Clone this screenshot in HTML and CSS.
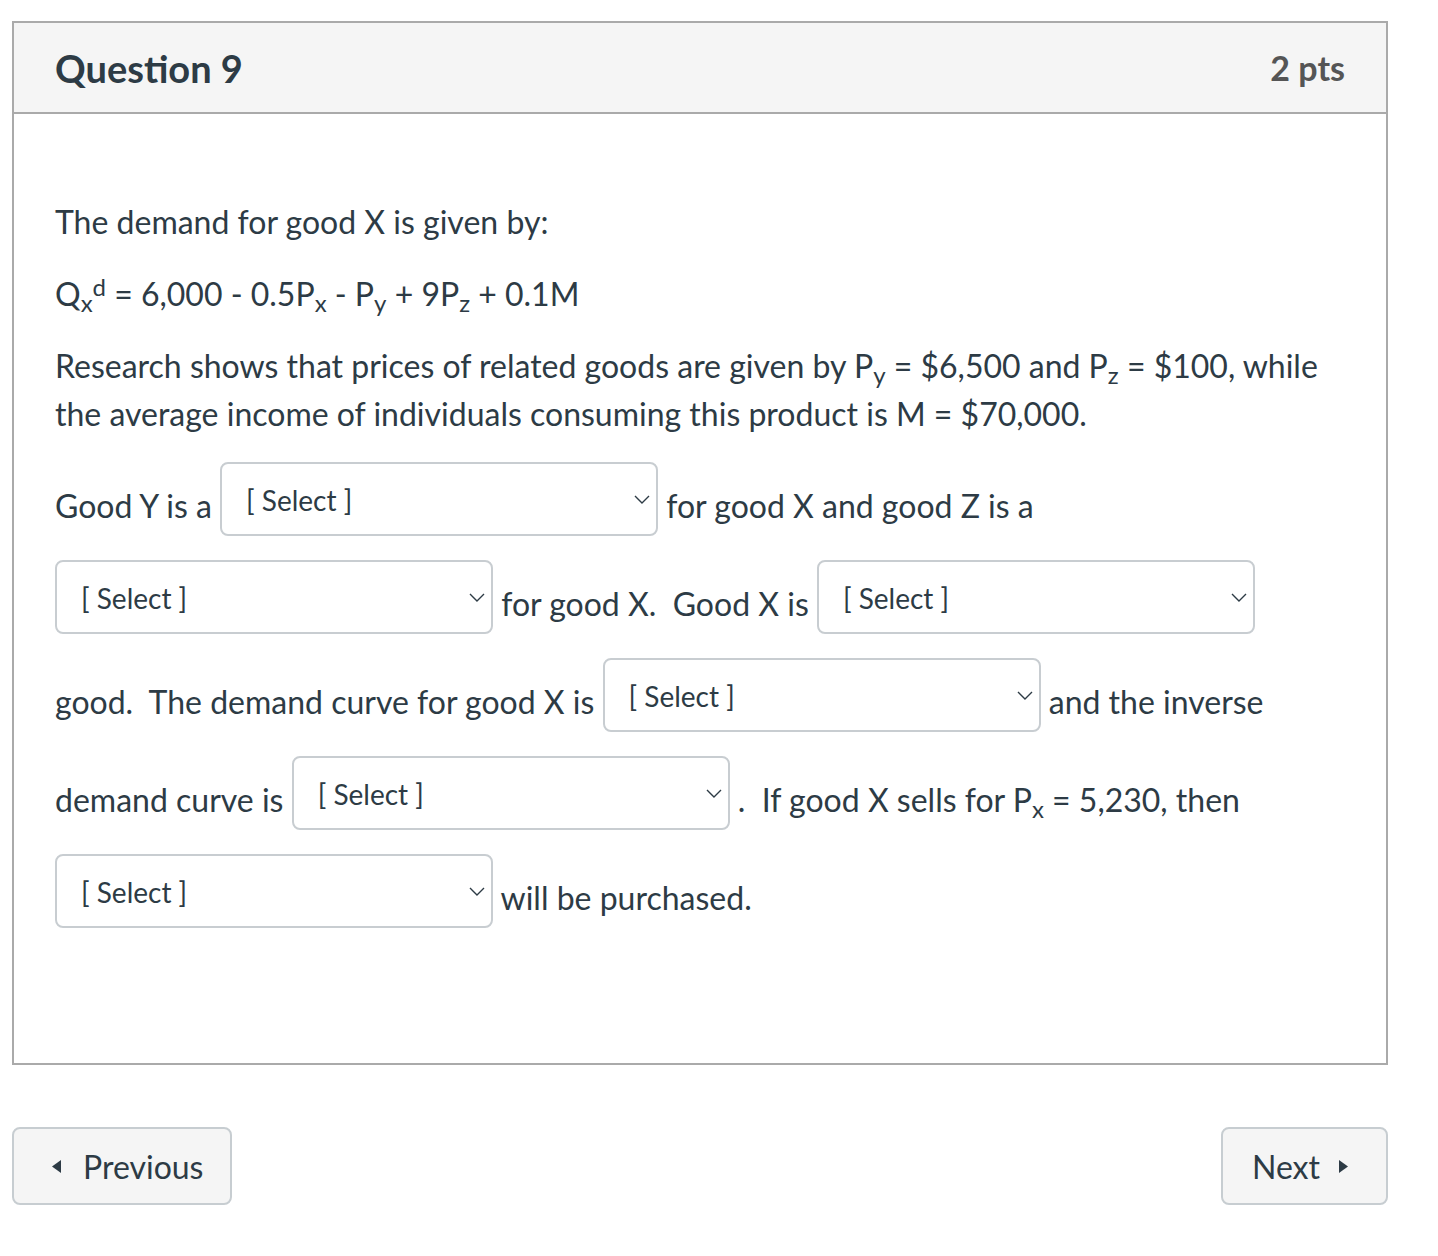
FILE: index.html
```html
<!DOCTYPE html>
<html lang="en">
<head>
<meta charset="utf-8">
<title>Question 9</title>
<link rel="stylesheet" href="styles.css">
</head>
<body>
<div class="page">
  <div class="question">
    <div class="header">
      <h2 class="title">Question 9</h2>
      <span class="points">2 pts</span>
    </div>
    <div class="text">
      <p>The demand for good X is given by:</p>
      <p>Q<sub>x</sub><sup>d</sup> = 6,000 - 0.5P<sub>x</sub> - P<sub>y</sub> + 9P<sub>z</sub> + 0.1M</p>
      <p>Research shows that prices of related goods are given by P<sub>y</sub> = $6,500 and P<sub>z</sub> = $100, while the average income of individuals consuming this product is M = $70,000.</p>
      <p class="blanks">Good Y is a <span class="select"><span class="select-label">[ Select ]</span><svg class="chev" width="16" height="9" viewBox="0 0 16 9"><polyline points="1,1 8,8 15,1" fill="none" stroke="#2d3b45" stroke-width="1.4"/></svg></span> for good X and good Z is a <span class="select"><span class="select-label">[ Select ]</span><svg class="chev" width="16" height="9" viewBox="0 0 16 9"><polyline points="1,1 8,8 15,1" fill="none" stroke="#2d3b45" stroke-width="1.4"/></svg></span> for good X.&nbsp; Good X is <span class="select"><span class="select-label">[ Select ]</span><svg class="chev" width="16" height="9" viewBox="0 0 16 9"><polyline points="1,1 8,8 15,1" fill="none" stroke="#2d3b45" stroke-width="1.4"/></svg></span> good.&nbsp; The demand curve for good X is <span class="select"><span class="select-label">[ Select ]</span><svg class="chev" width="16" height="9" viewBox="0 0 16 9"><polyline points="1,1 8,8 15,1" fill="none" stroke="#2d3b45" stroke-width="1.4"/></svg></span> and the inverse demand curve is <span class="select"><span class="select-label">[ Select ]</span><svg class="chev" width="16" height="9" viewBox="0 0 16 9"><polyline points="1,1 8,8 15,1" fill="none" stroke="#2d3b45" stroke-width="1.4"/></svg></span> .&nbsp; If good X sells for P<sub>x</sub> = 5,230, then <span class="select"><span class="select-label">[ Select ]</span><svg class="chev" width="16" height="9" viewBox="0 0 16 9"><polyline points="1,1 8,8 15,1" fill="none" stroke="#2d3b45" stroke-width="1.4"/></svg></span> will be purchased.</p>
    </div>
  </div>
  <div class="nav">
    <button class="btn btn-prev" type="button"><svg class="tri" width="9" height="13" viewBox="0 0 9 13"><polygon points="9,0 9,13 0,6.5" fill="#2d3b45"/></svg><span>Previous</span></button>
    <button class="btn btn-next" type="button"><span>Next</span><svg class="tri" width="9" height="13" viewBox="0 0 9 13"><polygon points="0,0 0,13 9,6.5" fill="#2d3b45"/></svg></button>
  </div>
</div>
</body>
</html>
```

FILE: styles.css
```css
html, body {
  margin: 0;
  padding: 0;
  background: #ffffff;
}

body {
  font-family: Lato, "Open Sans", "Liberation Sans", sans-serif;
  color: #2d3b45;
}

.page {
  width: 1376px;
  padding: 21px 0 0 12px;
}

.question {
  border: 2px solid #aaaaaa;
  background: #ffffff;
}

.header {
  display: flex;
  align-items: center;
  justify-content: space-between;
  height: 89px;
  padding: 0 41px;
  background: #f5f5f5;
  border-bottom: 2px solid #aaaaaa;
}

.title {
  margin: 0;
  font-size: 38px;
  font-weight: 700;
  color: #2d3b45;
}

.points {
  font-size: 34px;
  font-weight: 700;
  color: #555555;
}

.text {
  padding: 84px 41px 111px;
  font-size: 32px;
  line-height: 48px;
}

.text p {
  margin: 0 0 24px;
}

.text p:last-child {
  margin-bottom: 0;
}

sub, sup {
  font-size: 75%;
  line-height: 0;
  position: relative;
}

sub {
  vertical-align: -6px;
}

sup {
  vertical-align: 10px;
}

.select {
  display: inline-flex;
  align-items: center;
  justify-content: space-between;
  box-sizing: border-box;
  width: 438px;
  height: 74px;
  margin: 0 0 24px;
  padding: 3px 6px 0 24px;
  border: 2px solid #c8cdd1;
  border-radius: 8px;
  background: #ffffff;
  vertical-align: 7px;
  font-size: 28px;
  line-height: 1.2;
}

.chev {
  display: block;
  margin-top: -3px;
}

.nav {
  display: flex;
  justify-content: space-between;
  margin-top: 62px;
}

.btn {
  display: inline-flex;
  align-items: center;
  height: 78px;
  box-sizing: border-box;
  border: 2px solid #c7cdd1;
  border-radius: 8px;
  background: #f5f5f5;
  color: #2d3b45;
  font-family: Lato, "Open Sans", "Liberation Sans", sans-serif;
  font-size: 32px;
  cursor: pointer;
}

.btn-prev {
  width: 220px;
  padding: 0 0 0 38px;
  gap: 22px;
}

.btn-next {
  width: 167px;
  padding: 0 0 0 29px;
  gap: 19px;
}

.tri {
  display: block;
}
```
